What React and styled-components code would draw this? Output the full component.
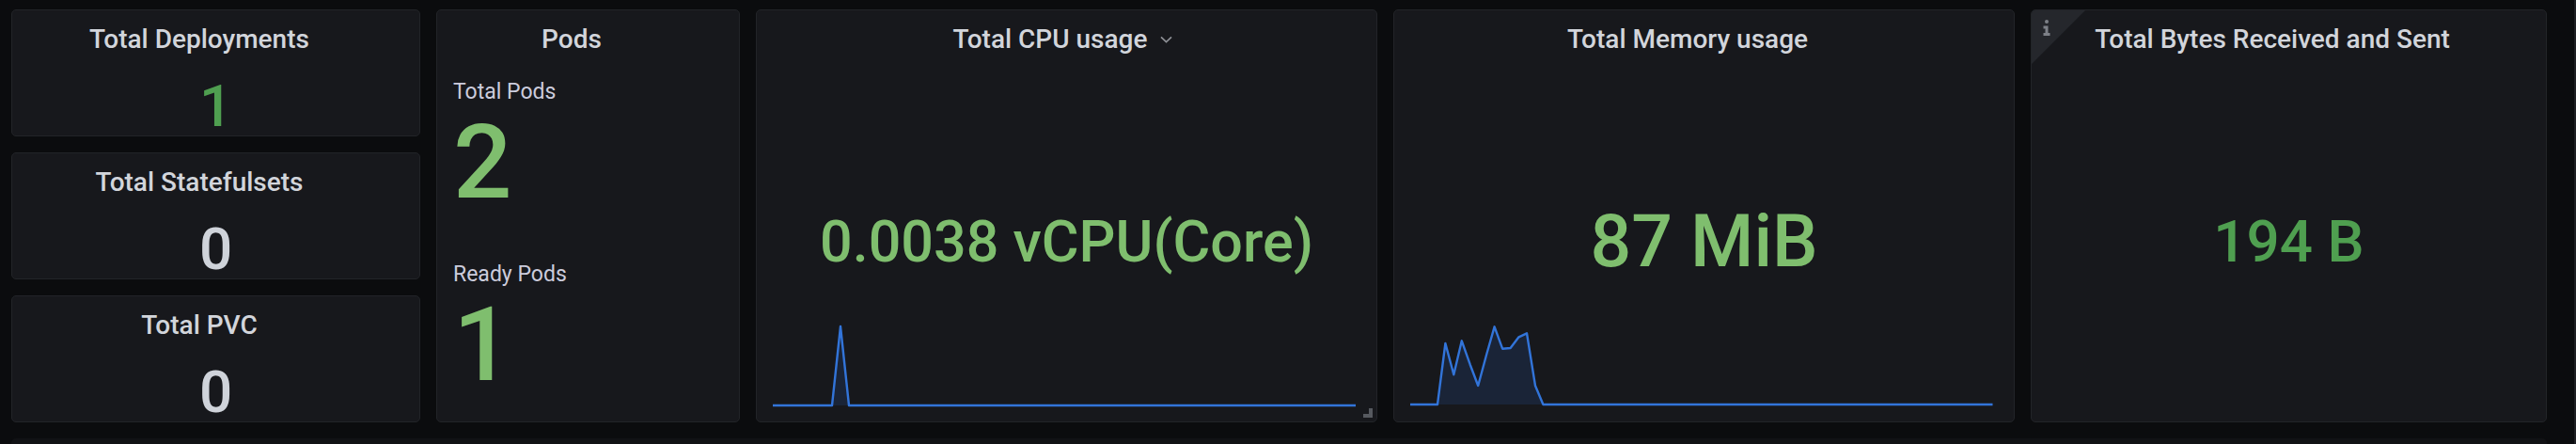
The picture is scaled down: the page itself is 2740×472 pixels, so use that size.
import React from 'react';
import styled, { createGlobalStyle } from 'styled-components';

const Global = createGlobalStyle`
  html, body { margin: 0; padding: 0; background: #0b0c0e; }
  body { font-family: Roboto, "Liberation Sans", sans-serif; overflow: hidden; }
  * { box-sizing: border-box; }
`;

const Page = styled.div`
  display: flex;
  width: 2740px;
  height: 472px;
  overflow: hidden;
  background: #0b0c0e;
`;

const Dashboard = styled.div`
  flex: 1;
  display: flex;
  flex-direction: column;
  gap: 17px;
  padding: 10px 0 0 12px;
`;

const Scrollbar = styled.div`
  width: 2px;
  background: #1e1f23;
`;

const PanelRow = styled.div`
  display: flex;
  gap: 17px;
  align-items: flex-start;
`;

const Column = styled.div`
  display: flex;
  flex-direction: column;
  gap: 17px;
  width: 435px;
`;

const Panel = styled.div`
  position: relative;
  width: ${p => p.$w}px;
  height: ${p => p.$h}px;
  background: #17181c;
  border: 1px solid #222428;
  border-radius: 5px;
  display: flex;
  flex-direction: column;
`;

const Header = styled.div`
  height: 60px;
  flex-shrink: 0;
  display: flex;
  align-items: center;
  justify-content: center;
  padding-right: 35px;
`;

const Title = styled.h2`
  position: relative;
  margin: 0;
  font-size: 28px;
  line-height: 33px;
  font-weight: 500;
  color: #d2d5db;
  white-space: nowrap;
`;

const MenuChevron = styled.svg`
  position: absolute;
  left: calc(100% + 14px);
  top: 50%;
  transform: translateY(-35%);
`;

const StatBody = styled.div`
  display: flex;
  flex-direction: column;
  align-items: ${p => (p.$left ? 'flex-start' : 'center')};
  padding-top: ${p => p.$pad}px;
  padding-left: ${p => (p.$left ? 17 : 0)}px;
  flex: 1;
  min-height: 0;
`;

const Value = styled.div`
  font-size: ${p => p.$size}px;
  line-height: ${p => (p.$lh ? `${p.$lh}px` : 1)};
  font-weight: 500;
  color: ${p => p.$color};
  white-space: nowrap;
`;

const PodItem = styled.div`
  display: flex;
  flex-direction: column;
  gap: 6px;
  & + & { margin-top: 50px; }
`;

const PodLabel = styled.div`
  font-size: 23px;
  line-height: 28px;
  font-weight: 400;
  color: #ccccdc;
`;

const Chart = styled.svg`
  display: block;
  flex-shrink: 0;
`;

const ChartBox = styled.div`
  margin-top: auto;
`;

const ResizeHandle = styled.svg`
  position: absolute;
  right: 4px;
  bottom: 4px;
`;

const InfoCorner = styled.div`
  position: absolute;
  top: 0;
  left: 0;
  width: 57px;
  height: 57px;
  background: #25272c;
  border-top-left-radius: 4px;
  clip-path: polygon(0 0, 100% 0, 0 100%);
`;

const InfoIcon = styled.svg`
  position: absolute;
  left: 12px;
  top: 10px;
`;

const NextRow = styled.div`
  width: 2697px;
  height: 24px;
  background: #111215;
  border-radius: 5px 5px 0 0;
`;

const GREEN_DARK = '#4f9f50';
const GREEN_LIGHT = '#7fbe6e';
const GREY = '#cfd3da';

function Sparkline({ width, line, fill }) {
  return (
    <Chart width={width} height={110} viewBox={`0 0 ${width} 110`}>
      <polygon points={fill} fill="rgba(50,116,217,0.14)" />
      <polyline points={line} fill="none" stroke="#3274d9" strokeWidth="2.4" strokeLinejoin="round" />
    </Chart>
  );
}

function SmallStat({ title, value, color }) {
  return (
    <Panel $w={435} $h={135}>
      <Header><Title>{title}</Title></Header>
      <StatBody $pad={14}>
        <Value $size={62} $lh={56} $color={color}>{value}</Value>
      </StatBody>
    </Panel>
  );
}

const cpuLine = '17,93 80,93 89,9 98,93 637,93';
const cpuFill = '80,93 89,9 98,93';
const memPts = '46,92 54.4,27 63.3,60.3 71.8,24.3 80.75,49.7 89.2,72 98.2,38.7 106.6,9.3 115.1,32.7 123.6,32 132.5,20.3 141,16.3 150,72 158.4,92';
const memLine = `17,92 ${memPts} 636.5,92`;
const memFill = memPts;

export default function App() {
  return (
    <Page>
      <Global />
      <Dashboard>
        <PanelRow>
          <Column>
            <SmallStat title="Total Deployments" value="1" color={GREEN_DARK} />
            <SmallStat title="Total Statefulsets" value="0" color={GREY} />
            <SmallStat title="Total PVC" value="0" color={GREY} />
          </Column>

          <Panel $w={323} $h={439}>
            <Header><Title>Pods</Title></Header>
            <StatBody $pad={13} $left>
              <PodItem>
                <PodLabel>Total Pods</PodLabel>
                <Value $size={110} $color={GREEN_LIGHT}>2</Value>
              </PodItem>
              <PodItem>
                <PodLabel>Ready Pods</PodLabel>
                <Value $size={110} $color={GREEN_LIGHT}>1</Value>
              </PodItem>
            </StatBody>
          </Panel>

          <Panel $w={661} $h={439}>
            <Header>
              <Title>
                Total CPU usage
                <MenuChevron width="13" height="8" viewBox="0 0 13 8">
                  <path d="M1 1.2 L6.5 6.5 L12 1.2" fill="none" stroke="#8e9096" strokeWidth="1.6" />
                </MenuChevron>
              </Title>
            </Header>
            <StatBody $pad={156}>
              <Value $size={61} $color={GREEN_LIGHT}>0.0038 vCPU(Core)</Value>
            </StatBody>
            <ChartBox>
              <Sparkline width={659} line={cpuLine} fill={cpuFill} />
            </ChartBox>
            <ResizeHandle width="10" height="10" viewBox="0 0 10 10">
              <path d="M6 0 H10 V10 H0 V6 H6 Z" fill="#56595f" />
            </ResizeHandle>
          </Panel>

          <Panel $w={661} $h={439}>
            <Header><Title>Total Memory usage</Title></Header>
            <StatBody $pad={148}>
              <Value $size={77} $color={GREEN_LIGHT}>87 MiB</Value>
            </StatBody>
            <ChartBox>
              <Sparkline width={659} line={memLine} fill={memFill} />
            </ChartBox>
          </Panel>

          <Panel $w={549} $h={439}>
            <InfoCorner />
            <InfoIcon width="8" height="17" viewBox="0 0 8 17">
              <circle cx="4" cy="2" r="2" fill="#7d8087" />
              <path d="M0.5 6.5 H5.5 V14 H7.5 V17 H0.5 V14 H2.5 V9.5 H0.5 Z" fill="#7d8087" />
            </InfoIcon>
            <Header><Title>Total Bytes Received and Sent</Title></Header>
            <StatBody $pad={155}>
              <Value $size={62} $color={GREEN_DARK}>194 B</Value>
            </StatBody>
          </Panel>
        </PanelRow>
        <NextRow />
      </Dashboard>
      <Scrollbar />
    </Page>
  );
}
